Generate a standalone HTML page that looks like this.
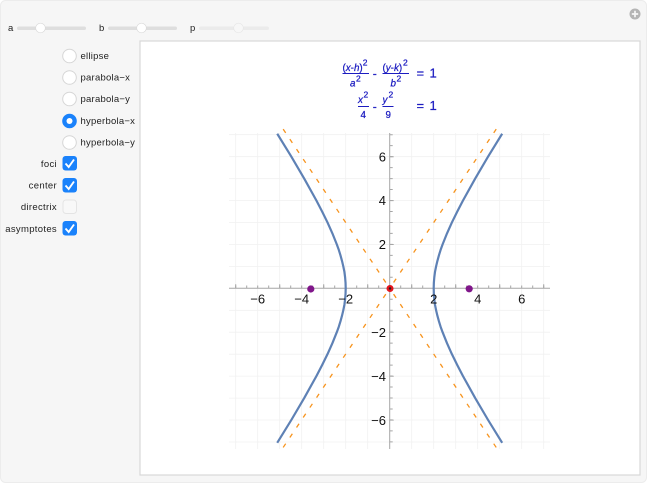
<!DOCTYPE html>
<html><head><meta charset="utf-8">
<style>
html,body{margin:0;padding:0;background:#fff}
body{width:647px;height:483px;overflow:hidden;position:relative;font-family:"Liberation Sans",sans-serif}
svg{position:absolute;left:0;top:0}
</style></head>
<body>
<svg width="647" height="483" viewBox="0 0 647 483" font-family="Liberation Sans, sans-serif">
<rect x="0.5" y="0.5" width="646" height="482" rx="5" fill="#f6f6f6" stroke="#ececec"/>
<!-- sliders -->
<g font-size="9.5" fill="#222">
<text x="8" y="31">a</text><text x="99" y="31">b</text><text x="190" y="31">p</text>
</g>
<rect x="17" y="26.5" width="69" height="3.5" rx="1.75" fill="#dedede"/>
<rect x="108" y="26.5" width="69" height="3.5" rx="1.75" fill="#dedede"/>
<rect x="199" y="26.5" width="70" height="3.5" rx="1.75" fill="#ebebeb"/>
<circle cx="40.5" cy="28" r="4.8" fill="#fff" stroke="#d8d8d8" stroke-width=".6"/>
<circle cx="141.5" cy="28" r="4.8" fill="#fff" stroke="#d8d8d8" stroke-width=".6"/>
<circle cx="238.5" cy="28" r="4.8" fill="#f7f7f7" stroke="#e6e6e6" stroke-width=".6"/>
<!-- add icon -->
<circle cx="635" cy="14" r="5.5" fill="#b4b4b4"/>
<path d="M635 10.8V17.2M631.8 14H638.2" stroke="#f6f6f6" stroke-width="1.7"/>
<!-- radios -->
<g fill="#fff" stroke="#d6d6d6" stroke-width="1">
<circle cx="69.5" cy="56" r="6.8"/><circle cx="69.5" cy="77.5" r="6.8"/><circle cx="69.5" cy="99" r="6.8"/><circle cx="69.5" cy="142.5" r="6.8"/>
</g>
<circle cx="69.5" cy="121" r="7.3" fill="#1a82fb"/><circle cx="69.5" cy="121" r="3" fill="#fff"/>
<g font-size="9.5" fill="#222" letter-spacing=".24">
<text x="80.5" y="59">ellipse</text>
<text x="80.5" y="80.5">parabola−x</text>
<text x="80.5" y="102">parabola−y</text>
<text x="80.5" y="124">hyperbola−x</text>
<text x="80.5" y="145.5">hyperbola−y</text>
</g>
<g font-size="9.5" fill="#222" text-anchor="end" letter-spacing=".32">
<text x="57" y="167">foci</text><text x="57" y="188.5">center</text><text x="57" y="210">directrix</text><text x="57" y="232">asymptotes</text>
</g>
<!-- checkboxes -->
<g fill="#1a82fb">
<rect x="62.5" y="156" width="14.5" height="14.5" rx="3"/>
<rect x="62.5" y="178" width="14.5" height="14.5" rx="3"/>
<rect x="62.5" y="221" width="14.5" height="14.5" rx="3"/>
</g>
<rect x="63" y="200" width="13.5" height="13.5" rx="3" fill="#f8f8f8" stroke="#e4e4e4"/>
<g fill="none" stroke="#fff" stroke-width="1.9">
<path d="M65.5 163.5l3.2 3.5 5.3-7.5"/>
<path d="M65.5 185.5l3.2 3.5 5.3-7.5"/>
<path d="M65.5 228.5l3.2 3.5 5.3-7.5"/>
</g>
<!-- plot frame -->
<rect x="140" y="41" width="500" height="434" fill="#fff" stroke="#d8d8d8" stroke-width="1.2"/>
<!-- formula -->
<g fill="#1c1cc0" stroke="#1c1cc0" stroke-width=".25" font-size="9.8">
<text x="342.5" y="71">(<tspan font-style="italic">x</tspan>-<tspan font-style="italic">h</tspan>)</text><text x="362.8" y="65.5" font-size="8.5">2</text>
<text x="350" y="86.5" font-style="italic">a</text><text x="356" y="81.5" font-size="8.5">2</text>
<text x="372.8" y="77.5" font-size="12">-</text>
<text x="382.5" y="71">(<tspan font-style="italic">y</tspan>-<tspan font-style="italic">k</tspan>)</text><text x="403" y="65.5" font-size="8.5">2</text>
<text x="390.5" y="86.5" font-style="italic">b</text><text x="396.5" y="81.5" font-size="8.5">2</text>
<text x="416.5" y="77.5" font-size="13">=</text><text x="429.5" y="77.5" font-size="13">1</text>
<text x="358" y="103" font-style="italic">x</text><text x="363.5" y="97.5" font-size="8.5">2</text>
<text x="360.5" y="118">4</text>
<text x="372.8" y="110.5" font-size="12">-</text>
<text x="382.5" y="103" font-style="italic">y</text><text x="388.5" y="97.5" font-size="8.5">2</text>
<text x="385.5" y="118">9</text>
<text x="416.5" y="110" font-size="13">=</text><text x="429.5" y="110" font-size="13">1</text>
</g>
<path d="M342.5 73.5H369M382.5 73.5H409M358 106.5H369M382.5 106.5H393.5" stroke="#1c1cc0" stroke-width="1"/>
<!-- grid -->
<path stroke="#f1f1f1" stroke-width=".8" fill="none" d="M235.7 133V449M257.7 133V449M279.7 133V449M301.7 133V449M323.7 133V449M345.7 133V449M367.7 133V449M411.7 133V449M433.7 133V449M455.7 133V449M477.7 133V449M499.7 133V449M521.7 133V449M543.7 133V449M229 134.7H550M229 156.7H550M229 178.7H550M229 200.5H550M229 222.5H550M229 244.4H550M229 266.4H550M229 310.3H550M229 332.2H550M229 354.2H550M229 376.1H550M229 398.1H550M229 420H550M229 442H550"/>
<!-- axes -->
<path stroke="#a6a6a6" stroke-width="1" fill="none" d="M229 288.3H550M389.7 133V449"/>
<line x1="235.2" y1="287" x2="544.2" y2="287" stroke="#a6a6a6" stroke-width="3" stroke-dasharray="1 10"/>
<line x1="235.2" y1="286.3" x2="544.2" y2="286.3" stroke="#a6a6a6" stroke-width="4" stroke-dasharray="1 43"/>
<line x1="391.2" y1="134.2" x2="391.2" y2="443" stroke="#a6a6a6" stroke-width="3" stroke-dasharray="1 9.97"/>
<line x1="391.7" y1="156.2" x2="391.7" y2="443" stroke="#a6a6a6" stroke-width="4" stroke-dasharray="1 42.9"/>
<!-- asymptotes -->
<g stroke="#f7941e" stroke-width="1.3" fill="none" stroke-dasharray="4.5 7.5" stroke-dashoffset="-7">
<path d="M389.7 288.3L497 128"/><path d="M389.7 288.3L282.4 128"/><path d="M389.7 288.3L497 448.6"/><path d="M389.7 288.3L282.4 448.6"/>
</g>
<!-- hyperbola -->
<g stroke="#5e81b5" stroke-width="2.2" fill="none" stroke-linejoin="round" stroke-linecap="square">
<path d="M501.6 134.7L488.1 156.6L475.2 178.55L463 200.5L457.3 211.5L451.9 222.45L447 233.4L442.6 244.4L440.6 249.9L438.9 255.4L437.4 260.9L436.1 266.35L435 271.8L434.3 277.3L433.85 282.8L433.7 288.3L433.85 293.8L434.3 299.3L435 304.8L436.1 310.25L437.4 315.7L438.9 321.2L440.6 326.7L442.6 332.2L447 343.2L451.9 354.15L457.3 365.1L463 376.1L475.2 398.05L488.1 420L501.6 441.9"/>
<path transform="translate(779.4,0) scale(-1,1)" d="M501.6 134.7L488.1 156.6L475.2 178.55L463 200.5L457.3 211.5L451.9 222.45L447 233.4L442.6 244.4L440.6 249.9L438.9 255.4L437.4 260.9L436.1 266.35L435 271.8L434.3 277.3L433.85 282.8L433.7 288.3L433.85 293.8L434.3 299.3L435 304.8L436.1 310.25L437.4 315.7L438.9 321.2L440.6 326.7L442.6 332.2L447 343.2L451.9 354.15L457.3 365.1L463 376.1L475.2 398.05L488.1 420L501.6 441.9"/>
</g>
<!-- points -->
<circle cx="310.8" cy="289" r="3.6" fill="#80168a"/>
<circle cx="469.2" cy="288.8" r="3.6" fill="#80168a"/>
<circle cx="390" cy="288.5" r="3.5" fill="#e3141c"/>
<circle cx="390" cy="288.5" r="1.2" fill="#222"/>
<!-- tick labels -->
<g font-size="13" fill="#111">
<g text-anchor="middle">
<text x="257.7" y="303.5">−6</text><text x="301.7" y="303.5">−4</text><text x="345.7" y="303.5">−2</text>
<text x="433.7" y="303.5">2</text><text x="477.7" y="303.5">4</text><text x="521.7" y="303.5">6</text>
</g>
<g text-anchor="end">
<text x="386" y="161.5">6</text><text x="386" y="205">4</text><text x="386" y="249">2</text>
<text x="386" y="337">−2</text><text x="386" y="381">−4</text><text x="386" y="425">−6</text>
</g>
</g>
</svg>
</body></html>
